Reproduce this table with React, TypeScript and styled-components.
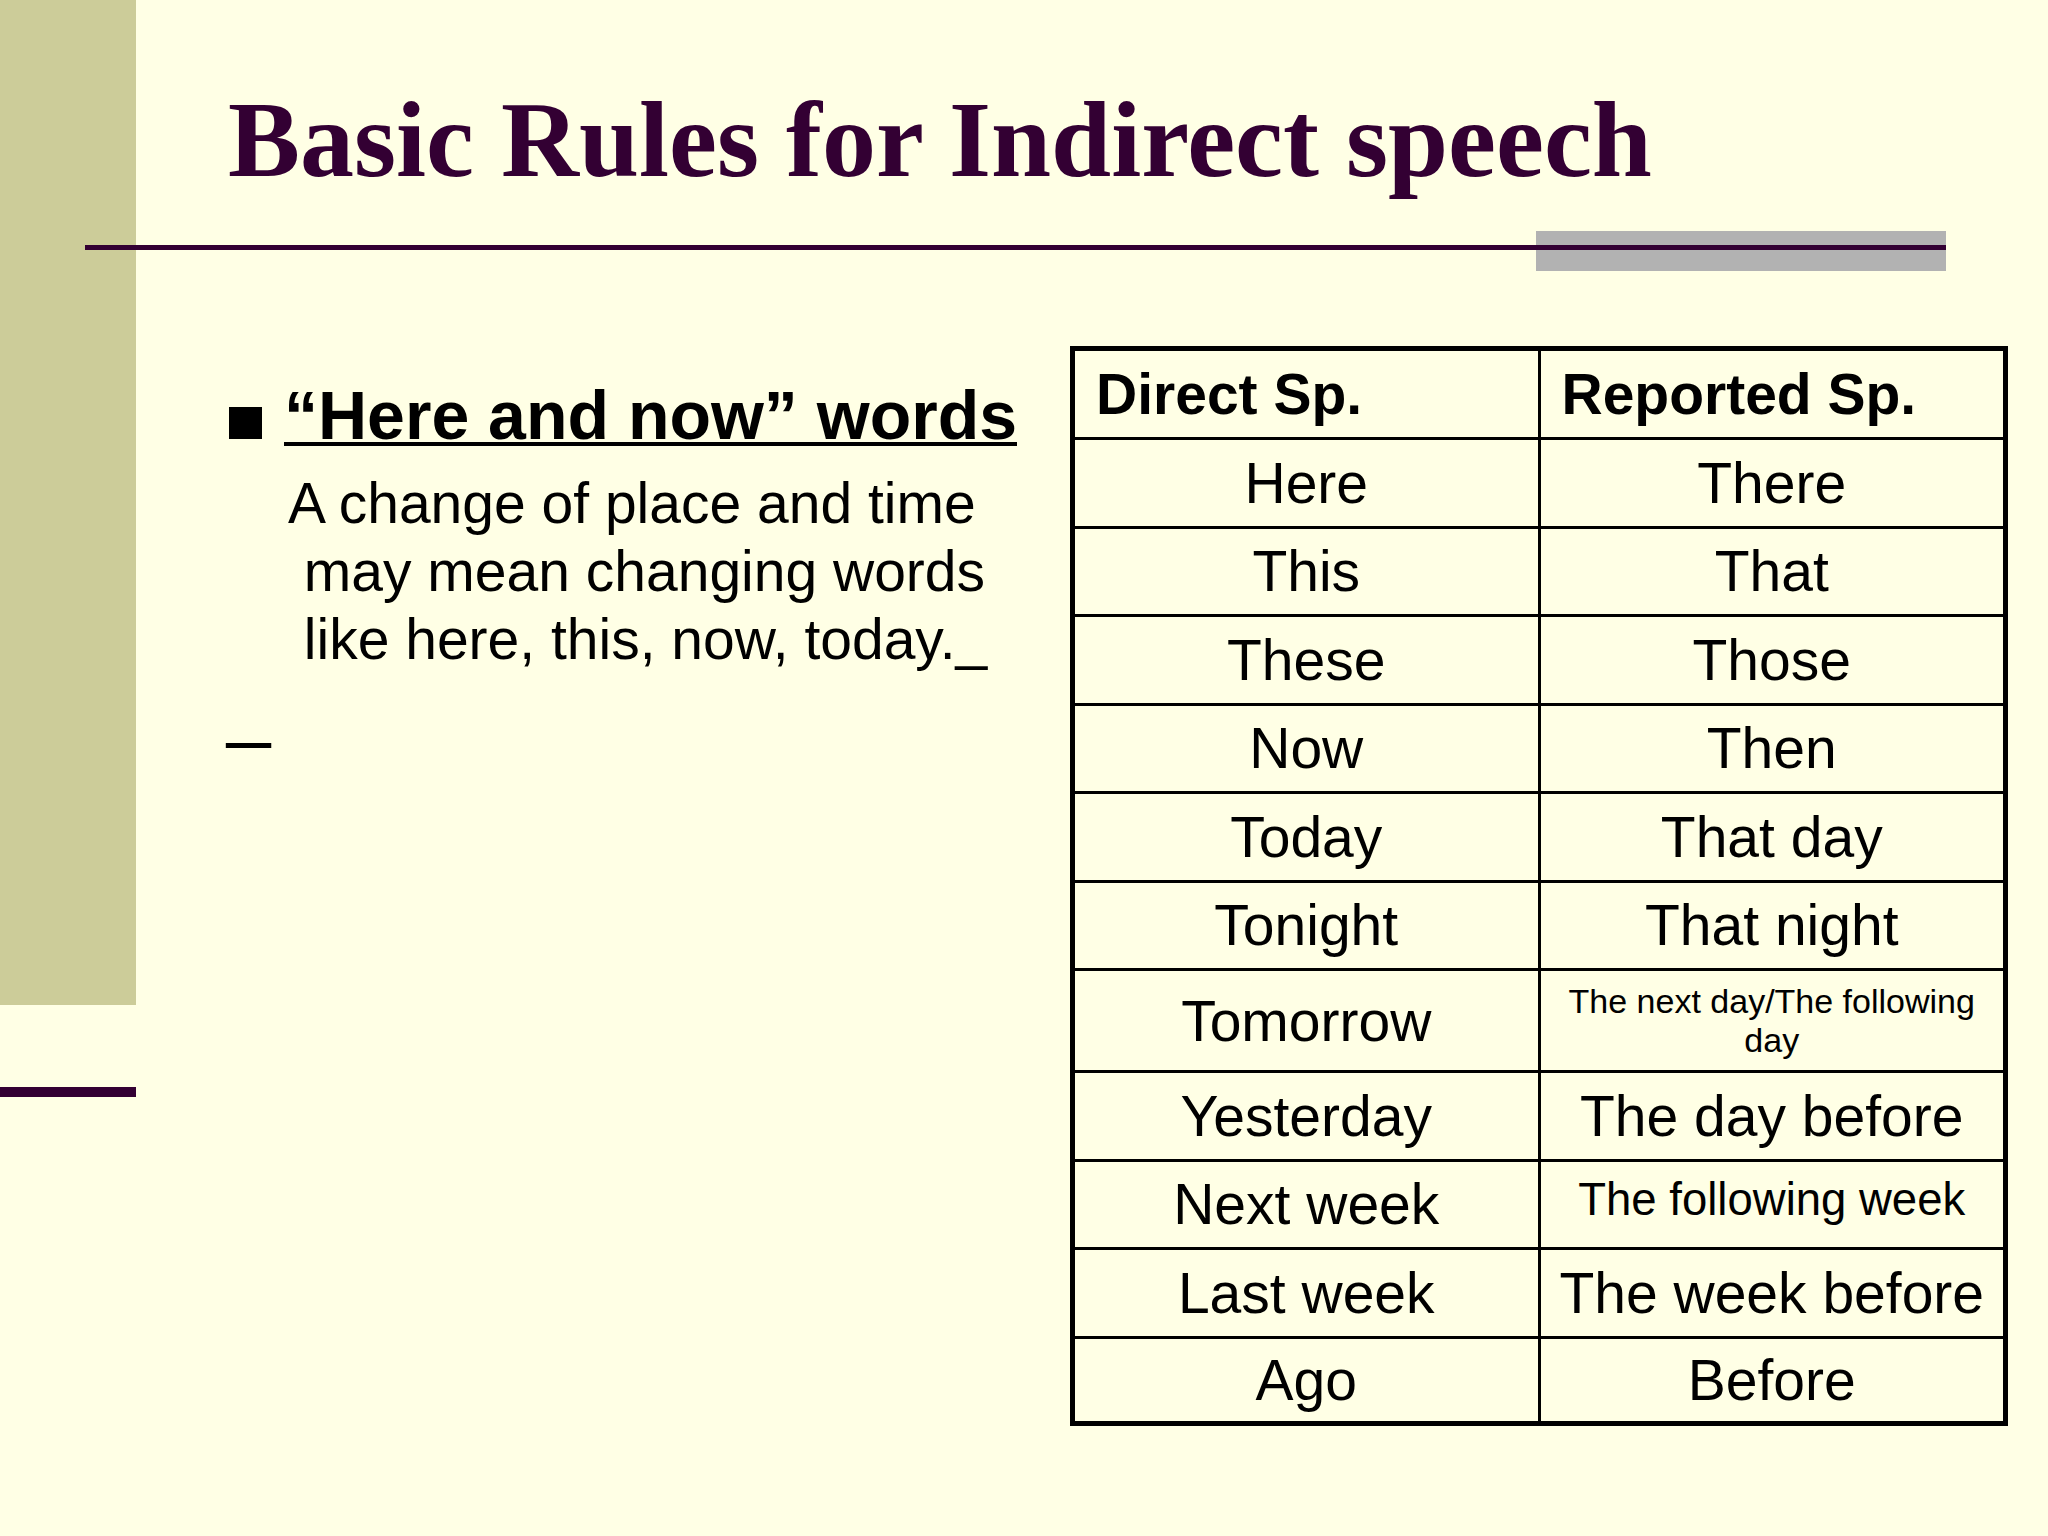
import React from "react";
import styled, { createGlobalStyle } from "styled-components";

const GlobalStyle = createGlobalStyle`
  html, body {
    margin: 0;
    padding: 0;
    background: #ffffe5;
  }
  body {
    font-family: "Liberation Sans", Arial, sans-serif;
    color: #000;
  }
`;

const Slide = styled.div`
  width: 2048px;
  height: 1536px;
  display: grid;
  grid-template-columns: 136px 1fr;
  background: #ffffe5;
  overflow: hidden;
`;

const SideRail = styled.aside`
  display: flex;
  flex-direction: column;
`;

const SideBlock = styled.div`
  height: 1005px;
  background: #cccc99;
`;

const SideAccent = styled.div`
  margin-top: 82px;
  height: 10px;
  background: #330033;
`;

const Main = styled.main`
  display: flex;
  flex-direction: column;
  padding-left: 92px;
`;

const Title = styled.h1`
  margin: 86px 0 0;
  font-family: "Liberation Serif", "Times New Roman", serif;
  font-weight: 700;
  font-size: 108px;
  line-height: 108px;
  color: #330033;
  white-space: nowrap;
`;

const RuleRow = styled.div`
  position: relative;
  margin: 37px 0 0 -143px;
  width: 1861px;
  height: 40px;
  display: flex;
  justify-content: flex-end;

  &::before {
    content: "";
    position: absolute;
    left: 0;
    right: 0;
    top: 14px;
    height: 5px;
    background: #330033;
    z-index: 1;
  }
`;

const GrayBlock = styled.div`
  width: 410px;
  height: 40px;
  background: #b2b2b2;
`;

const Content = styled.section`
  display: flex;
  margin-top: 75px;
`;

const TextColumn = styled.div`
  width: 842px;
  padding-top: 30px;
  box-sizing: border-box;
`;

const Heading = styled.h2`
  margin: 0;
  font-size: 68px;
  font-weight: 700;
  line-height: 78px;
  white-space: nowrap;
`;

const BulletMark = styled.span`
  display: inline-block;
  width: 33px;
  height: 32px;
  margin-left: 1px;
  margin-right: 22px;
  background: #000;
  vertical-align: baseline;
`;

const HeadingText = styled.span`
  text-decoration: underline;
  text-decoration-thickness: 4px;
  text-underline-offset: 3px;
`;

const Body = styled.p`
  margin: 15px 0 0 60px;
  font-size: 57px;
  line-height: 68px;
  white-space: pre;
`;

const BodyLine = styled.span`
  display: block;
`;

const StrayMark = styled.p`
  margin: 2px 0 0 -1px;
  font-size: 78px;
  line-height: 60px;
`;

const Table = styled.div`
  width: 938px;
  box-sizing: border-box;
  border: 5px solid #000;
  background: #000;
  display: grid;
  grid-template-columns: 1fr 1fr;
  grid-template-rows: 86px repeat(6, 85.5px) 99px repeat(3, 85.5px) 82px;
  gap: 3px;
`;

const Cell = styled.div<{ $head?: boolean; $size?: number; $top?: number }>`
  background: #ffffe5;
  display: flex;
  justify-content: ${(p) => (p.$head ? "flex-start" : "center")};
  align-items: ${(p) => (p.$top !== undefined ? "flex-start" : "center")};
  padding: ${(p) => (p.$top !== undefined ? `${p.$top}px` : "0")} 0 0
    ${(p) => (p.$head ? "21px" : "0")};
  box-sizing: border-box;
  font-size: ${(p) => p.$size ?? 57}px;
  font-weight: ${(p) => (p.$head ? 700 : 400)};
  line-height: ${(p) => (p.$size && p.$size < 40 ? "39px" : "normal")};
  text-align: center;
  white-space: nowrap;
`;

type Row = {
  direct: string;
  reported: React.ReactNode;
  size?: number;
  top?: number;
};

const rows: Row[] = [
  { direct: "Here", reported: "There" },
  { direct: "This", reported: "That" },
  { direct: "These", reported: "Those" },
  { direct: "Now", reported: "Then" },
  { direct: "Today", reported: "That day" },
  { direct: "Tonight", reported: "That night" },
  {
    direct: "Tomorrow",
    reported: (
      <>
        The next day/The following
        <br />
        day
      </>
    ),
    size: 34,
  },
  { direct: "Yesterday", reported: "The day before" },
  { direct: "Next week", reported: "The following week", size: 45.5, top: 12 },
  { direct: "Last week", reported: "The week before" },
  { direct: "Ago", reported: "Before" },
];

export default function App() {
  return (
    <>
      <GlobalStyle />
      <Slide>
        <SideRail>
          <SideBlock />
          <SideAccent />
        </SideRail>
        <Main>
          <Title>Basic Rules for Indirect speech</Title>
          <RuleRow>
            <GrayBlock />
          </RuleRow>
          <Content>
            <TextColumn>
              <Heading>
                <BulletMark />
                <HeadingText>“Here and now” words</HeadingText>
              </Heading>
              <Body>
                <BodyLine>A change of place and time</BodyLine>
                <BodyLine> may mean changing words</BodyLine>
                <BodyLine> like here, this, now, today._</BodyLine>
              </Body>
              <StrayMark>_</StrayMark>
            </TextColumn>
            <Table>
              <Cell $head>Direct Sp.</Cell>
              <Cell $head>Reported Sp.</Cell>
              {rows.map((r) => (
                <React.Fragment key={r.direct}>
                  <Cell>{r.direct}</Cell>
                  <Cell $size={r.size} $top={r.top}>
                    {r.reported}
                  </Cell>
                </React.Fragment>
              ))}
            </Table>
          </Content>
        </Main>
      </Slide>
    </>
  );
}
